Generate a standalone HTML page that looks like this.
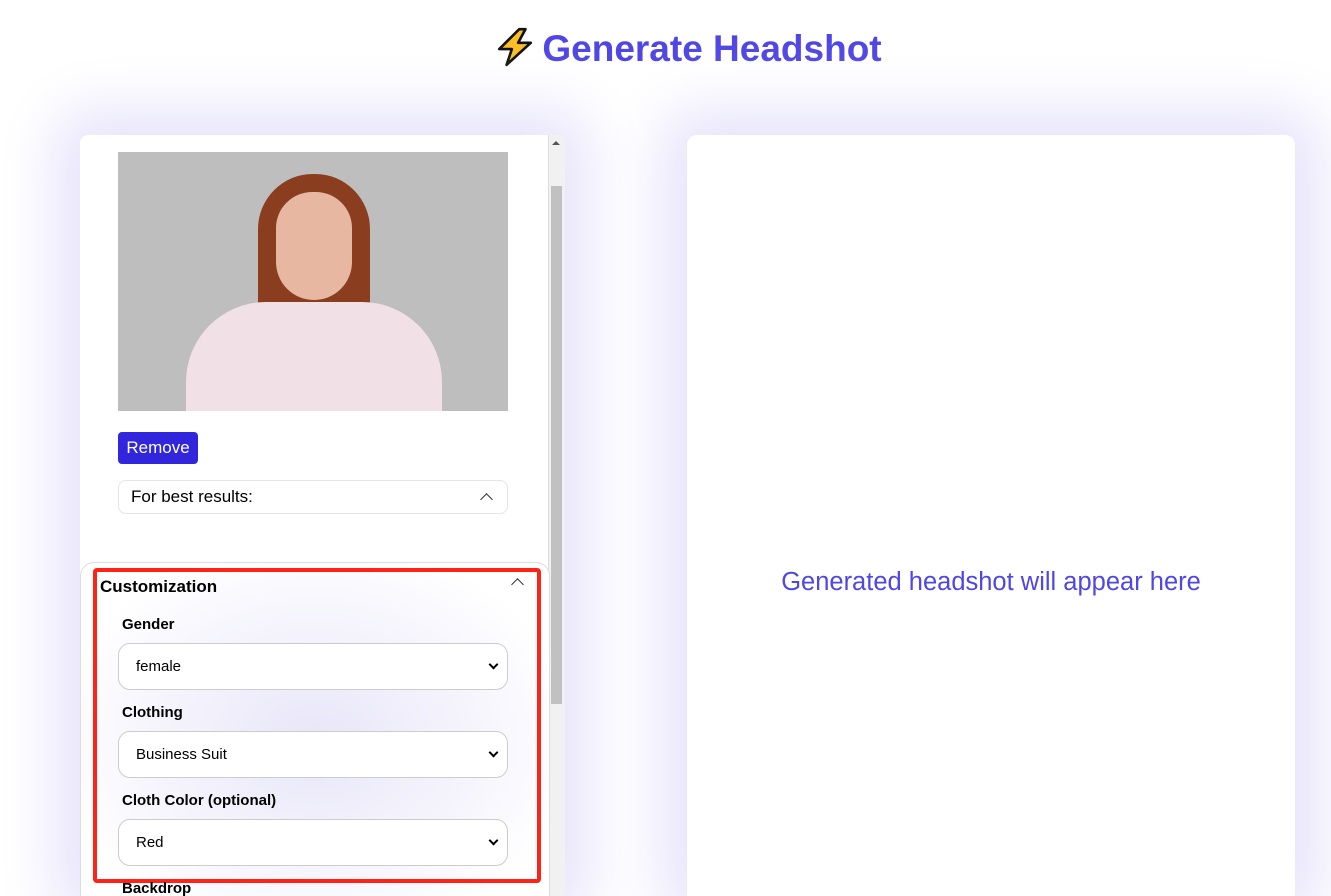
<!DOCTYPE html>
<html style="overflow:hidden;height:896px"><head><meta charset="utf-8"><style>
body{margin:0;width:1331px;height:896px;overflow:hidden;background:#fff;font-family:"Liberation Sans",sans-serif;position:relative}
.h{position:absolute;top:26px;left:0;width:1376px;text-align:center;font-size:37px;font-weight:bold;color:#4f46e5}
.glow{position:absolute;top:135px;height:761px;border-radius:10px;box-shadow:0 0 60px 25px #e6e3fb}
.left{position:absolute;left:80px;top:135px;width:468px;height:761px;background:#fff;border-radius:8px 0 0 0}
.sb{position:absolute;left:548px;top:135px;width:16px;height:761px;background:#f1f1f1;border-left:1px solid #ddd}
.thumb{position:absolute;left:551px;top:186px;width:11px;height:518px;background:#c1c1c1}
.right{position:absolute;left:687px;top:135px;width:608px;height:761px;background:#fff;border-radius:10px 10px 0 0}
.ph{position:absolute;left:118px;top:152px;width:390px;height:259px;background:#bebebe;overflow:hidden}
.btn{position:absolute;left:118px;top:432px;width:80px;height:32px;background:#3126dc;color:#fff;border-radius:4px;font-size:17px;line-height:32px;text-align:center}
.acc{position:absolute;left:118px;top:480px;border:1px solid #e5e5e5;border-radius:8px;font-size:17px;line-height:32px;padding-left:12px;box-sizing:border-box;width:390px;height:34px}
.card{position:absolute;left:80px;top:562px;width:468px;height:360px;border:1px solid #ddd;border-radius:14px;background:radial-gradient(ellipse at 50% 50%,#e8e6f8 0%,#f6f5fd 50%,#fff 80%)}
.red{position:absolute;left:93px;top:568px;width:440px;height:307px;border:4px solid #ff2216;border-radius:4px}
.lbl{position:absolute;left:122px;font-size:15px;font-weight:bold}
.sel{position:absolute;left:118px;width:390px;height:47px;box-sizing:border-box;border:1px solid #ccc;border-radius:12px;background:#fff;font-size:15px;line-height:45px;padding-left:17px}
.sel:after{content:"";position:absolute;right:10px;top:17px;width:5px;height:5px;border-right:2px solid #000;border-bottom:2px solid #000;transform:rotate(45deg)}
.chev{position:absolute;width:8px;height:8px;border-left:1.3px solid #333;border-top:1.3px solid #333;transform:rotate(45deg)}
</style></head><body>
<div class="h"><svg width="42" height="42" viewBox="0 0 40 40" style="vertical-align:-7px;margin-right:6px"><path d="M24 3 L5 22 H17 L12 37 L35 16 H23 L30 3 Z" fill="#fbbf24" stroke="#111" stroke-width="2.5" stroke-linejoin="round"/></svg>Generate Headshot</div>
<div class="glow" style="left:80px;width:484px"></div>
<div class="glow" style="left:687px;width:608px"></div>
<div class="left"></div>
<div class="right"></div>
<div style="position:absolute;left:687px;top:568px;width:608px;text-align:center;font-size:25.5px;color:#4f46e5">Generated headshot will appear here</div>
<div class="sb"></div><div class="thumb"></div>
<div style="position:absolute;left:552px;top:141px;border:4px solid transparent;border-bottom:4px solid #555;border-top:0"></div>
<div class="ph">
<div style="position:absolute;left:140px;top:22px;width:112px;height:150px;background:#8a3d1f;border-radius:55px 55px 20px 20px"></div>
<div style="position:absolute;left:68px;top:150px;width:256px;height:140px;background:#f1e1e6;border-radius:80px 80px 0 0"></div>
<div style="position:absolute;left:158px;top:40px;width:76px;height:108px;background:#e7b7a2;border-radius:38px 38px 40px 40px"></div>
</div>
<div class="btn">Remove</div>
<div class="acc">For best results:<div class="chev" style="right:16px;top:14px"></div></div>
<div class="card"></div>
<div class="red"></div>
<div style="position:absolute;left:100px;top:577px;font-size:17px;font-weight:bold">Customization</div>
<div class="chev" style="left:513px;top:580px"></div>
<div class="lbl" style="top:616px">Gender</div>
<div class="sel" style="top:643px">female</div>
<div class="lbl" style="top:704px">Clothing</div>
<div class="sel" style="top:731px">Business Suit</div>
<div class="lbl" style="top:792px">Cloth Color (optional)</div>
<div class="sel" style="top:819px">Red</div>
<div class="lbl" style="top:880px">Backdrop</div>
</body></html>
